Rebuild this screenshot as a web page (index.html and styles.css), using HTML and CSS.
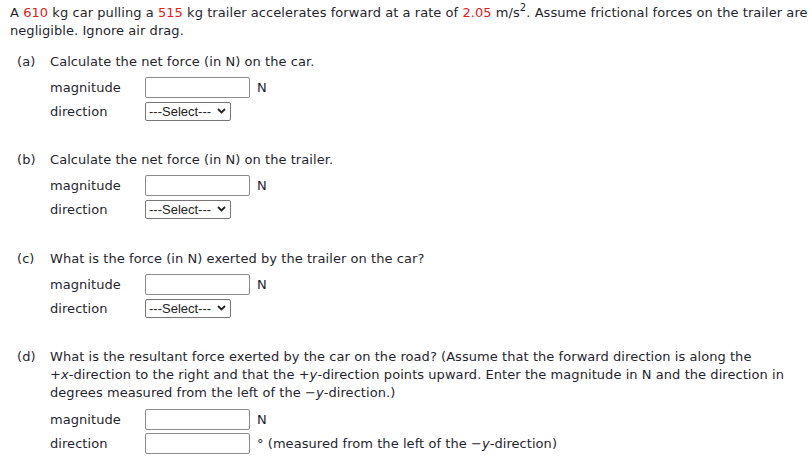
FILE: index.html
```html
<!DOCTYPE html>
<html>
<head>
<meta charset="utf-8">
<link rel="stylesheet" href="styles.css">
</head>
<body>
<div class="page">
  <p class="intro">A <span class="red">610</span> kg car pulling a <span class="red">515</span> kg trailer accelerates forward at a rate of <span class="red">2.05</span> m/s<sup>2</sup>. Assume frictional forces on the trailer are negligible. Ignore air drag.</p>

  <div class="part">
    <div class="label">(a)</div>
    <div class="body">
      <div class="question">Calculate the net force (in N) on the car.</div>
      <div class="row"><span class="field">magnitude</span><input class="box" type="text"><span class="unit">N</span></div>
      <div class="row"><span class="field">direction</span><span class="sel">---Select---<svg class="chev" width="9" height="6" viewBox="0 0 9 6"><path d="M1 1 L4.5 4.5 L8 1" fill="none" stroke="#222" stroke-width="1.8"/></svg></span></div>
    </div>
  </div>

  <div class="part">
    <div class="label">(b)</div>
    <div class="body">
      <div class="question">Calculate the net force (in N) on the trailer.</div>
      <div class="row"><span class="field">magnitude</span><input class="box" type="text"><span class="unit">N</span></div>
      <div class="row"><span class="field">direction</span><span class="sel">---Select---<svg class="chev" width="9" height="6" viewBox="0 0 9 6"><path d="M1 1 L4.5 4.5 L8 1" fill="none" stroke="#222" stroke-width="1.8"/></svg></span></div>
    </div>
  </div>

  <div class="part part-c">
    <div class="label">(c)</div>
    <div class="body">
      <div class="question">What is the force (in N) exerted by the trailer on the car?</div>
      <div class="row"><span class="field">magnitude</span><input class="box" type="text"><span class="unit">N</span></div>
      <div class="row"><span class="field">direction</span><span class="sel">---Select---<svg class="chev" width="9" height="6" viewBox="0 0 9 6"><path d="M1 1 L4.5 4.5 L8 1" fill="none" stroke="#222" stroke-width="1.8"/></svg></span></div>
    </div>
  </div>

  <div class="part part-d">
    <div class="label">(d)</div>
    <div class="body">
      <div class="question">What is the resultant force exerted by the car on the road? (Assume that the forward direction is along the <span class="nw">+<i>x</i>-direction</span> to the right and that the <span class="nw">+<i>y</i>-direction</span> points upward. Enter the magnitude in N and the direction in degrees measured from the left of the <span class="nw">&minus;<i>y</i>-direction</span>.)</div>
      <div class="row"><span class="field">magnitude</span><input class="box" type="text"><span class="unit">N</span></div>
      <div class="row row-input"><span class="field">direction</span><input class="box" type="text"><span class="unit">&deg; (measured from the left of the &minus;<i>y</i>-direction)</span></div>
    </div>
  </div>
</div>
</body>
</html>
```
FILE: styles.css
```css
html, body { margin: 0; padding: 0; background: #fff; }
body {
  font-family: "DejaVu Sans", Verdana, sans-serif;
  font-size: 13px;
  letter-spacing: 0.06px;
  color: #1f1f2e;
}
.page { padding: 4px 0 0 10px; }
.intro { margin: 0; line-height: 18px; width: 802px; }
.red { color: #e0201c; }
sup { font-size: 10px; line-height: 0; vertical-align: 6px; }
.part { display: flex; margin-top: 13px; }
.part + .part { margin-top: 28px; }
.part + .part-c { margin-top: 29px; }
.part + .part-d { margin-top: 28px; }
.label { width: 40px; padding-left: 7px; box-sizing: border-box; line-height: 18px; }
.body { width: 740px; }
.question { line-height: 18px; }
.nw { white-space: nowrap; }
.row { display: flex; align-items: center; height: 24px; }
.question + .row { margin-top: 4px; }
.part-d .question + .row { margin-top: 5px; }
.row-input { height: 25px; }
.field { width: 95px; }
.box {
  width: 105px; height: 21px; box-sizing: border-box;
  border: 1px solid #8a8a8a; border-radius: 2px; margin: 0; padding: 0;
  background: #fff;
}
.unit { margin-left: 7px; }
.sel {
  display: inline-flex; align-items: center; justify-content: space-between;
  width: 86px; height: 19px; box-sizing: border-box;
  border: 1px solid #767676; border-radius: 2px;
  font-family: "Liberation Sans", Arial, sans-serif; font-size: 13px; letter-spacing: 0; color: #222;
  padding: 0 4px 0 3px;
}
.chev { display: block; }
i { font-family: "DejaVu Sans", Verdana, sans-serif; font-style: italic; }
```
